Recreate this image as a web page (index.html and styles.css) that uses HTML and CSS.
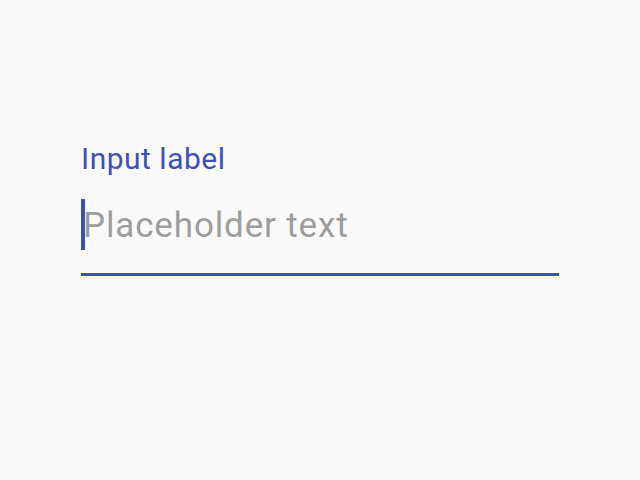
FILE: index.html
```html
<!DOCTYPE html>
<html>
<head>
<meta charset="utf-8">
<link rel="stylesheet" href="styles.css">
</head>
<body>
<div class="field">
  <label class="label">Input label</label>
  <div class="input-row">
    <span class="cursor"></span>
    <span class="placeholder">Placeholder text</span>
  </div>
  <div class="underline"></div>
</div>
</body>
</html>
```
FILE: styles.css
```css
html, body {
  margin: 0;
  padding: 0;
  background: #fafafa;
  width: 640px;
  height: 480px;
  font-family: Roboto, "Liberation Sans", sans-serif;
}
.field {
  display: flex;
  flex-direction: column;
  padding: 141px 0 0 81px;
  width: 478px;
}
.label {
  color: #3f51b5;
  font-size: 30px;
  line-height: 36px;
  letter-spacing: 0.5px;
}
.input-row {
  display: flex;
  align-items: flex-start;
  height: 52px;
  margin-top: 21px;
}
.cursor {
  width: 4px;
  height: 51px;
  margin-top: 1px;
  background: #3f51b5;
}
.placeholder {
  color: #9e9e9e;
  font-size: 35px;
  line-height: 40px;
  letter-spacing: 0.85px;
  margin-top: 8px;
  margin-left: -2px;
}
.underline {
  height: 3px;
  background: #3f51b5;
  margin-top: 23px;
}
```
